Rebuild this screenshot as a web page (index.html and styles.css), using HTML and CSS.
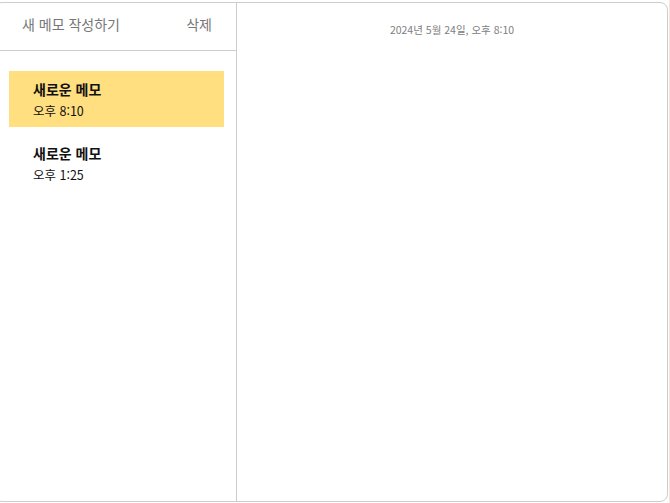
FILE: index.html
```html
<!DOCTYPE html>
<html lang="ko">
<head>
<meta charset="utf-8">
<title>메모</title>
<link rel="stylesheet" href="styles.css">
</head>
<body>
<div class="app">
  <aside class="sidebar">
    <div class="toolbar">
      <button class="tool-btn">새 메모 작성하기</button>
      <button class="tool-btn">삭제</button>
    </div>
    <ul class="memo-list">
      <li class="memo-item selected">
        <div class="memo-title">새로운 메모</div>
        <div class="memo-time">오후 8:10</div>
      </li>
      <li class="memo-item">
        <div class="memo-title">새로운 메모</div>
        <div class="memo-time">오후 1:25</div>
      </li>
    </ul>
  </aside>
  <main class="editor">
    <div class="editor-date">2024년 5월 24일, 오후 8:10</div>
  </main>
</div>
</body>
</html>
```
FILE: styles.css
```css
html, body {
  margin: 0;
  padding: 0;
  background: #ffffff;
  overflow: hidden;
}
body {
  font-family: "Noto Sans CJK KR", "Noto Sans", sans-serif;
  border-right: 1px solid #fbe3dc;
  box-sizing: border-box;
  height: 503px;
}
.app {
  display: flex;
  margin: 2px 0 0 -6px;
  width: 674px;
  height: 500px;
  box-sizing: border-box;
  border: 1px solid #cccccc;
  border-radius: 8px;
  overflow: hidden;
}
.sidebar {
  width: 242px;
  flex: none;
  border-right: 1px solid #cccccc;
  box-sizing: border-box;
  display: flex;
  flex-direction: column;
}
.toolbar {
  height: 48px;
  box-sizing: border-box;
  border-bottom: 1px solid #cccccc;
  display: flex;
  align-items: center;
  justify-content: space-between;
  padding: 0 24px 5px 27px;
}
.tool-btn {
  border: none;
  background: none;
  padding: 0;
  font-family: inherit;
  font-size: 14px;
  line-height: 20px;
  color: #777777;
  cursor: pointer;
}
.memo-list {
  list-style: none;
  margin: 0;
  padding: 20px 12px 0 14px;
  display: flex;
  flex-direction: column;
  gap: 8px;
}
.memo-item {
  height: 56px;
  box-sizing: border-box;
  padding: 8px 24px 0 24px;
}
.memo-item.selected {
  background: #ffdf7f;
}
.memo-title {
  font-size: 14px;
  font-weight: 700;
  line-height: 20px;
  color: #111111;
}
.memo-time {
  padding-top: 2px;
  font-size: 12.5px;
  line-height: 20px;
  color: #111111;
}
.editor {
  flex: 1;
  display: flex;
  flex-direction: column;
  align-items: center;
  padding-top: 20px;
}
.editor-date {
  font-size: 10.5px;
  line-height: 14px;
  color: #808080;
}
```
